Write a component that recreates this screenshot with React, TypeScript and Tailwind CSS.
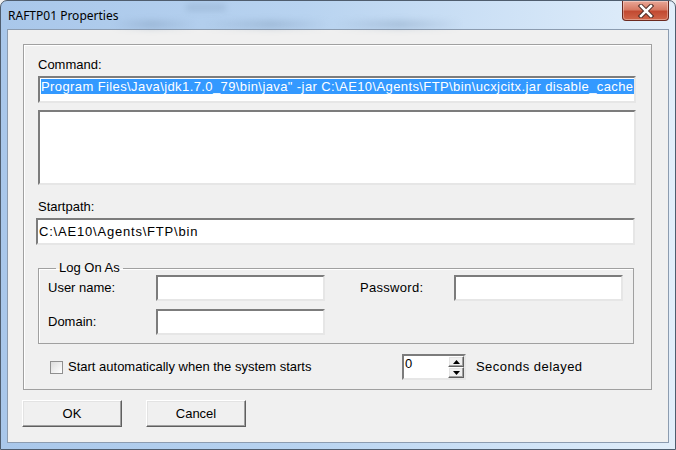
import React from 'react';

const sunken =
  'border-2 border-t-[#7c7c7c] border-l-[#7c7c7c] border-b-[#e6e6e6] border-r-[#e6e6e6] bg-white';

const raised =
  'border border-t-[#ffffff] border-l-[#ffffff] border-b-[#5f5f5f] border-r-[#5f5f5f] shadow-[inset_-1px_-1px_0_#a0a0a0,inset_1px_1px_0_#e3e3e3] bg-[#f0f0f0]';

const TextBox: React.FC<{ className?: string; children?: React.ReactNode }> = ({ className = '', children }) => (
  <div className={`${sunken} ${className}`}>{children}</div>
);

const PushButton: React.FC<{ label: string }> = ({ label }) => (
  <button className={`${raised} w-[100px] h-[27px] text-[13px] leading-none text-black`}>{label}</button>
);

const App: React.FC = () => {
  return (
    <div
      className="w-[676px] h-[450px] overflow-hidden bg-[#f0f0f0]"
      style={{ fontFamily: '"Liberation Sans", Arial, sans-serif' }}
    >
      <div className="w-full h-full flex flex-col rounded-t-[7px] border border-[#4f5d6e] bg-[linear-gradient(90deg,#a9c7ea_0%,#b8d3f0_45%,#d6e7f8_85%,#e2eefa_100%)]">
        {/* title bar */}
        <div className="h-[28px] shrink-0 flex items-start justify-between relative">
          <div className="absolute left-[110px] top-[19px] w-[400px] h-[9px] opacity-30 blur-[3px] bg-[linear-gradient(90deg,transparent,#6f8aa8_10%,transparent_22%,#6f8aa8_40%,transparent_55%,#6f8aa8_72%,transparent_88%)]" />
          <div className="absolute left-[185px] top-[3px] w-[40px] h-[7px] opacity-25 blur-[3px] bg-[#6f8aa8]" />
          <span
            className="relative pl-[7px] pt-[7px] text-[12px] leading-[16px] text-black"
            style={{ fontFamily: '"Noto Sans", "Open Sans", sans-serif' }}
          >
            RAFTP01 Properties
          </span>
          <div className="relative mr-[6px] w-[47px] h-[20px] rounded-b-[4px] border border-t-0 border-[#6b2a20] bg-[linear-gradient(180deg,#e9a797_0%,#d77a64_45%,#c24a32_55%,#d0664a_100%)] flex items-center justify-center shadow-[inset_0_0_0_1px_rgba(255,255,255,0.35)]">
            <svg width="18" height="14" viewBox="0 0 18 14">
              <path d="M4 2 L14 12 M14 2 L4 12" stroke="#4a2a24" strokeWidth="4.5" strokeLinecap="square" />
              <path d="M4 2 L14 12 M14 2 L4 12" stroke="#ffffff" strokeWidth="2.5" strokeLinecap="square" />
            </svg>
          </div>
        </div>

        {/* client area */}
        <div className="mx-[6px] mb-[6px] flex-1 border border-[#8c9cb0] bg-[#f0f0f0] pl-[15px] pr-[16px] pt-[14px]">
          <div className="w-[629px] h-[346px] border border-[#a0a0a0] shadow-[inset_1px_1px_0_#ffffff] pl-[14px] pr-[15px] pt-[12px] flex flex-col">
            <div className="text-[13px] leading-[16px] text-black">Command:</div>
            <TextBox className="mt-[3px] w-[598px] h-[27px] overflow-hidden pl-[1px] pt-[1px]">
              <div className="whitespace-nowrap text-[13px] leading-[15px] h-[15px] tracking-[0.4px]">
                <span className="bg-[#3399ff] text-white">
                  Program Files\Java\jdk1.7.0_79\bin\java" -jar C:\AE10\Agents\FTP\bin\ucxjcitx.jar disable_cache
                </span>
              </div>
            </TextBox>
            <TextBox className="mt-[7px] w-[598px] h-[75px]" />

            <div className="mt-[14px] text-[13px] leading-[16px] text-black">Startpath:</div>
            <TextBox className="mt-[3px] -ml-[2px] w-[599px] h-[27px] flex items-center pl-[1px]">
              <span className="text-[13px] leading-[15px] text-black tracking-[0.8px]">C:\AE10\Agents\FTP\bin</span>
            </TextBox>

            <fieldset className="mt-[16px] w-[596px] border border-[#a0a0a0] shadow-[inset_1px_1px_0_#ffffff] pl-[9px] pb-[8px] flex flex-col gap-[8px]">
              <legend className="ml-[8px] px-[3px] text-[13px] leading-[14px] text-black">Log On As</legend>
              <div className="flex items-center text-[13px] text-black">
                <span className="w-[108px]">User name:</span>
                <TextBox className="w-[169px] h-[26px]" />
                <span className="ml-[35px] w-[94px] tracking-[0.3px]">Password:</span>
                <TextBox className="w-[169px] h-[26px]" />
              </div>
              <div className="flex items-center text-[13px] text-black">
                <span className="w-[108px]">Domain:</span>
                <TextBox className="w-[169px] h-[26px]" />
              </div>
            </fieldset>

            <div className="mt-[10px] flex items-center text-[13px] text-black">
              <div className="w-[364px] flex items-center pl-[12px]">
                <span className="w-[13px] h-[13px] border border-[#8f8f8f] bg-[linear-gradient(135deg,#dcdcdc,#ffffff)]" />
                <span className="ml-[5px]">Start automatically when the system starts</span>
              </div>
              <div className={`${sunken} w-[64px] h-[26px] flex`}>
                <span className="flex-1 pl-[1px] leading-[15px]">0</span>
                <div className="w-[16px] flex flex-col">
                  <div className={`${raised} flex-1 flex items-center justify-center`}>
                    <svg width="7" height="4" viewBox="0 0 7 4">
                      <path d="M3.5 0 L7 4 L0 4 Z" fill="#000" />
                    </svg>
                  </div>
                  <div className={`${raised} flex-1 flex items-center justify-center`}>
                    <svg width="7" height="4" viewBox="0 0 7 4">
                      <path d="M0 0 L7 0 L3.5 4 Z" fill="#000" />
                    </svg>
                  </div>
                </div>
              </div>
              <span className="ml-[10px] tracking-[0.45px]">Seconds delayed</span>
            </div>
          </div>

          <div className="mt-[10px] -ml-[1px] flex gap-[24px]">
            <PushButton label="OK" />
            <PushButton label="Cancel" />
          </div>
        </div>
      </div>
    </div>
  );
};

export default App;
